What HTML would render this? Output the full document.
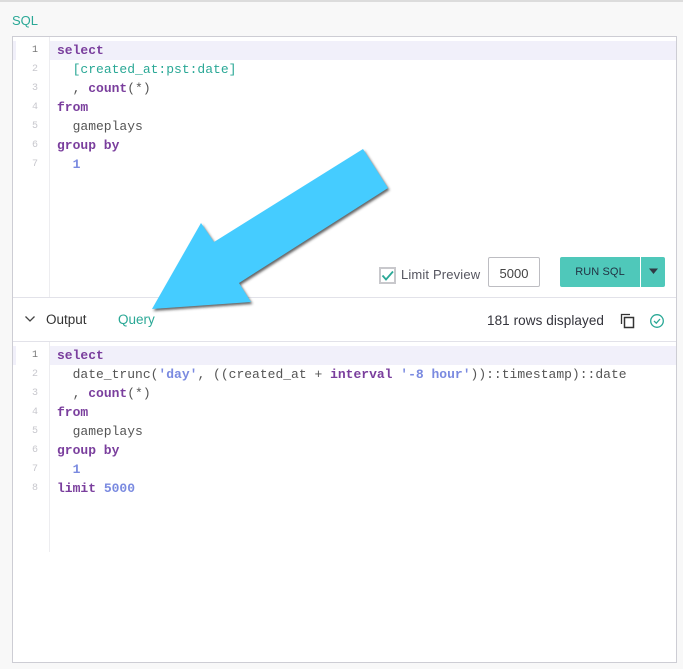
<!DOCTYPE html>
<html><head><meta charset="utf-8">
<style>
html,body{margin:0;padding:0}
body{width:683px;height:669px;position:relative;overflow:hidden;background:#f8f8f8;font-family:"Liberation Sans",sans-serif}
.a{position:absolute}
#panel{left:12px;top:36px;width:663px;height:625px;background:#fff;border:1px solid #cdcdd4}
.hl{position:absolute;height:19px;background:#f1f0fa}
.gut{position:absolute;left:49px;width:1px;background:#ededf0}
.l,.n{position:absolute;font-family:"Liberation Mono",monospace;white-space:pre;line-height:19px;height:19px}
.l{left:57px;font-size:13px;color:#555}
.n{left:15px;width:23px;text-align:right;font-size:10px;color:#c8c8ce}
.n.on{color:#777}
b{font-weight:bold;color:#7a3e9d}
i{font-style:normal;color:#7a8ae0}
i.s{font-weight:bold}
u{text-decoration:none;color:#2aa896}
.t{position:absolute;font-size:13px;white-space:nowrap;line-height:16px;color:#3c3c44}
</style></head>
<body>
<div class="a" style="left:0;top:0;width:683px;height:2px;background:#dcdcdc"></div>
<div class="t" style="left:12px;top:13px;color:#2aa896">SQL</div>
<div class="a" id="panel"></div>

<div class="hl" style="left:13px;top:41px;width:3px"></div>
<div class="hl" style="left:50px;top:41px;width:626px"></div>
<div class="gut" style="top:37px;height:260px"></div>

<div class="n on" style="top:41px">1</div><div class="l" style="top:41px"><b>select</b></div>
<div class="n" style="top:60px">2</div><div class="l" style="top:60px">  <u>[created_at:pst:date]</u></div>
<div class="n" style="top:79px">3</div><div class="l" style="top:79px">  , <b>count</b>(*)</div>
<div class="n" style="top:98px">4</div><div class="l" style="top:98px"><b>from</b></div>
<div class="n" style="top:117px">5</div><div class="l" style="top:117px">  gameplays</div>
<div class="n" style="top:136px">6</div><div class="l" style="top:136px"><b>group by</b></div>
<div class="n" style="top:155px">7</div><div class="l" style="top:155px">  <i class="s">1</i></div>

<div class="a" style="left:379px;top:267px;width:13px;height:13px;border:2px solid #c8c8cc;background:#fff"></div>
<svg class="a" style="left:379px;top:267px" width="17" height="17" viewBox="0 0 17 17"><path d="M3.5 8.5L7 12.5L14 4.5" fill="none" stroke="#2aa896" stroke-width="1.8"/></svg>
<div class="t" style="left:401px;top:267px;color:#55555f;letter-spacing:.15px">Limit Preview</div>
<div class="a" style="left:488px;top:257px;width:50px;height:28px;border:1px solid #bdbdc2;border-radius:2px;background:#fff;font-size:13px;line-height:31px;text-align:center;color:#444">5000</div>
<div class="a" style="left:560px;top:257px;width:80px;height:30px;background:#4fc8ba;border-radius:2px 0 0 2px;font-size:11px;line-height:31px;text-align:center;color:#234;letter-spacing:.1px">RUN SQL</div>
<div class="a" style="left:641px;top:257px;width:24px;height:30px;background:#4fc8ba;border-radius:0 2px 2px 0"></div>
<svg class="a" style="left:648px;top:268px" width="11" height="7" viewBox="0 0 11 7"><path d="M1 0.5H10L5.5 6Z" fill="#2f3a44"/></svg>

<div class="a" style="left:13px;top:297px;width:663px;height:1px;background:#e2e2e9"></div>
<div class="a" style="left:13px;top:341px;width:663px;height:1px;background:#e2e2e9"></div>

<svg class="a" style="left:24px;top:315px" width="12" height="8" viewBox="0 0 12 8"><path d="M1.5 1.5L6 6L10.5 1.5" fill="none" stroke="#444" stroke-width="1.3"/></svg>
<div class="t" style="left:46px;top:312px;font-size:13.5px;color:#333">Output</div>
<div class="t" style="left:118px;top:312px;font-size:13.5px;color:#2aa896">Query</div>
<div class="t" style="left:487px;top:313px;font-size:13.5px;color:#33333b;letter-spacing:.08px">181 rows displayed</div>
<svg class="a" style="left:620px;top:313px" width="16" height="16" viewBox="0 0 16 16"><path d="M1.5 11V1.5H10" fill="none" stroke="#333" stroke-width="1.3"/><rect x="4.5" y="4.5" width="9" height="10" fill="none" stroke="#333" stroke-width="1.5"/></svg>
<svg class="a" style="left:649px;top:313px" width="16" height="16" viewBox="0 0 16 16"><circle cx="8" cy="8" r="6.3" fill="none" stroke="#2aa896" stroke-width="1.3"/><path d="M5 8L7.3 10.2L11 6" fill="none" stroke="#2aa896" stroke-width="1.3"/></svg>

<div class="hl" style="left:13px;top:346px;width:3px"></div>
<div class="hl" style="left:50px;top:346px;width:626px"></div>
<div class="gut" style="top:342px;height:210px"></div>

<div class="n on" style="top:346px">1</div><div class="l" style="top:346px"><b>select</b></div>
<div class="n" style="top:365px">2</div><div class="l" style="top:365px">  date_trunc(<i class="s">'day'</i>, ((created_at + <b>interval</b> <i class="s">'-8 hour'</i>))::timestamp)::date</div>
<div class="n" style="top:384px">3</div><div class="l" style="top:384px">  , <b>count</b>(*)</div>
<div class="n" style="top:403px">4</div><div class="l" style="top:403px"><b>from</b></div>
<div class="n" style="top:422px">5</div><div class="l" style="top:422px">  gameplays</div>
<div class="n" style="top:441px">6</div><div class="l" style="top:441px"><b>group by</b></div>
<div class="n" style="top:460px">7</div><div class="l" style="top:460px">  <i class="s">1</i></div>
<div class="n" style="top:479px">8</div><div class="l" style="top:479px"><b>limit</b> <i class="s">5000</i></div>

<svg class="a" style="left:0;top:0" width="683" height="669" viewBox="0 0 683 669">
<defs><filter id="f" x="-10%" y="-10%" width="120%" height="120%"><feGaussianBlur stdDeviation="1.2"/></filter></defs>
<polygon points="363,149 388,188 239,283 251,302 152,309 201,223 214,242" transform="translate(1.5,2)" fill="#333" fill-opacity=".75" filter="url(#f)"/>
<polygon points="363,149 388,188 239,283 251,302 152,309 201,223 214,242" fill="#45ccff"/>
</svg>
</body></html>
